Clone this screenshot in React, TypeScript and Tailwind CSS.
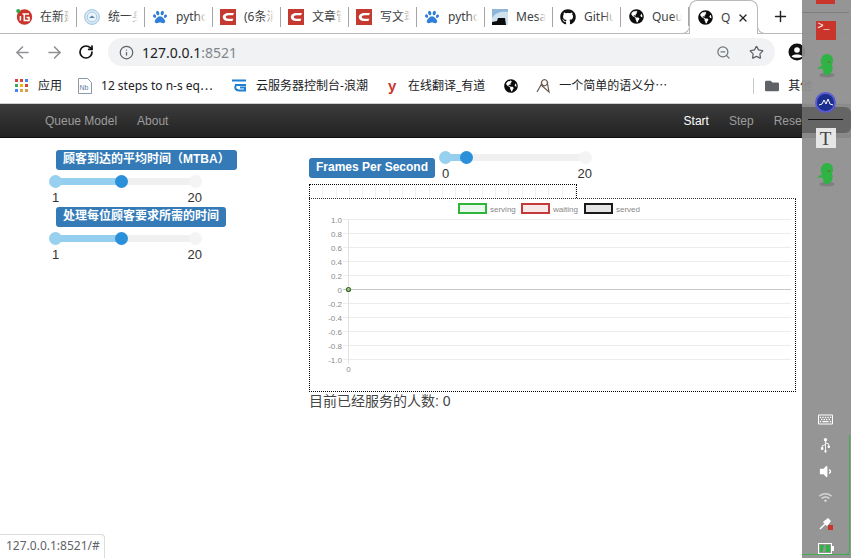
import React from "react";
import { FaGithub, FaGlobeAmericas, FaPaw, FaUsb, FaVolumeDown, FaWifi, FaRegKeyboard, FaFolder } from "react-icons/fa";
import { ArrowLeft, ArrowRight, RotateCw, Info, ZoomOut, Star, Plus, X } from "lucide-react";

const CJK = "font-['Noto_Sans','Noto_Sans_CJK_SC',sans-serif]";

function CsdnIcon() {
  return (
    <svg width="16" height="16" viewBox="0 0 16 16" className="shrink-0">
      <rect width="16" height="16" fill="#c43a31" />
      <path d="M14 4 H8.5 C5 4 2.8 5.8 2.8 8.2 C2.8 10.5 5 12 8 12 H12.4 L13.4 9.8 H8.4 C6.8 9.8 5.8 9.2 5.8 8.1 C5.8 7 6.8 6.3 8.4 6.3 H13 Z" fill="#fff" />
    </svg>
  );
}

function RedG() {
  return (
    <svg width="17" height="16" viewBox="0 0 17 16" className="shrink-0">
      <circle cx="8.5" cy="8" r="7.7" fill="#c9352b" />
      <circle cx="2.2" cy="2" r="2" fill="#2ea84a" />
      <path d="M6.5 5 H13 M8.3 5 V11.5 H13 V8.5 H10.5" stroke="#fff" strokeWidth="1.5" fill="none" />
      <path d="M4.4 7 V11.5" stroke="#fff" strokeWidth="1.5" />
    </svg>
  );
}

function Seal() {
  return (
    <svg width="16" height="16" viewBox="0 0 16 16" className="shrink-0">
      <circle cx="8" cy="8" r="7.4" fill="#d9e9f5" stroke="#9cc4e0" strokeWidth="1" />
      <circle cx="8" cy="8" r="4.8" fill="#eef5fa" stroke="#a7cbe4" strokeWidth="1" />
      <path d="M5 9 L8 6.5 L11 9 Z" fill="#4f87b5" />
    </svg>
  );
}

function MesaIcon() {
  return (
    <svg width="16" height="16" viewBox="0 0 16 16" className="shrink-0">
      <rect width="16" height="16" fill="#8db6d8" />
      <path d="M0 16 V9 C4 3 10 2 16 3 V16 Z" fill="#cfe0ee" />
      <path d="M0 16 V13 L5 12 L6 9 H13 L14 16 Z" fill="#0c0c0c" />
    </svg>
  );
}

function Tab({ icon, title }: { icon: React.ReactNode; title: string }) {
  return (
    <div className="flex h-[33px] w-[68px] shrink-0 items-center pl-[7px]">
      <div className="flex w-[16px] shrink-0 justify-center">{icon}</div>
      <div className="relative ml-[8px] w-[30px] overflow-hidden whitespace-nowrap text-[12px] leading-[18px] text-[#3c4043]">
        {title}
        <div className="absolute inset-y-0 right-0 w-[10px] bg-gradient-to-r from-transparent to-white" />
      </div>
      <div className="ml-auto h-[20px] w-px bg-[#a5a5a5]" />
    </div>
  );
}

function TabStrip() {
  const globe = <FaGlobeAmericas size={15} color="#0b0b0b" />;
  const paw = <FaPaw size={14} color="#2f7fd6" />;
  return (
    <div className="flex h-[34px] items-start border-b border-[#b8b9bb] bg-white pl-[9px]">
      <Tab icon={<RedG />} title="在新建" />
      <Tab icon={<Seal />} title="统一身" />
      <Tab icon={paw} title="python" />
      <Tab icon={<CsdnIcon />} title="(6条消" />
      <Tab icon={<CsdnIcon />} title="文章管" />
      <Tab icon={<CsdnIcon />} title="写文章" />
      <Tab icon={paw} title="python" />
      <Tab icon={<MesaIcon />} title="Mesa" />
      <Tab icon={<FaGithub size={16} color="#111" />} title="GitHub" />
      <Tab icon={globe} title="Queue" />
      <div className="relative z-10 flex h-[34px] w-[69px] shrink-0 items-center rounded-t-[8px] border-x border-t border-[#b8b9bb] bg-white pl-[8px]">
        {globe}
        <span className="ml-[8px] w-[14px] overflow-hidden text-[12px] text-[#3c4043]">Q</span>
        <X size={12} strokeWidth={2.6} className="ml-[2px] text-[#222]" />
        <div className="absolute -left-[8px] bottom-0 h-[8px] w-[8px] rounded-br-[8px] border-b border-r border-[#b8b9bb] bg-white" />
        <div className="absolute -right-[8px] bottom-0 h-[8px] w-[8px] rounded-bl-[8px] border-b border-l border-[#b8b9bb] bg-white" />
      </div>
      <Plus size={17} strokeWidth={2} className="ml-[14px] mt-[8px] text-[#222]" />
    </div>
  );
}

function AddressBar() {
  return (
    <div className="flex h-[34px] items-center bg-white pl-[13px] pt-[2px]">
      <ArrowLeft size={19} className="text-[#8f9194]" />
      <ArrowRight size={19} className="ml-[13px] text-[#8f9194]" />
      <RotateCw size={16} strokeWidth={2.6} className="ml-[14px] text-[#111]" />
      <div className="ml-[14px] flex h-[28px] w-[667px] items-center rounded-full bg-[#f0f2f4] pl-[11px]">
        <Info size={15} className="text-[#5f6368]" />
        <span className="ml-[8px] text-[14px] text-[#202124]">
          127.0.0.1<span className="text-[#80868b]">:8521</span>
        </span>
        <ZoomOut size={15} className="ml-auto text-[#70757a]" />
        <Star size={15} strokeWidth={2} className="ml-[18px] mr-[11px] text-[#5f6368]" />
      </div>
      <svg width="18" height="18" viewBox="0 0 18 18" className="ml-[13px] shrink-0">
        <circle cx="9" cy="9" r="8.5" fill="#111" />
        <circle cx="9" cy="7" r="2.8" fill="#fff" />
        <path d="M3.6 13.4 C5 11 13 11 14.4 13.4 C13 15.2 5 15.2 3.6 13.4 Z" fill="#fff" />
      </svg>
    </div>
  );
}

function Bookmarks() {
  const dots = ["#d9443a", "#d9443a", "#4285f4", "#3aa757", "#f2b50f", "#d9443a", "#4285f4", "#e0a050", "#d0a050"];
  return (
    <div className="flex h-[35px] items-center whitespace-nowrap bg-white text-[12px] text-[#202124]">
      <div className="ml-[15px] grid h-[13px] w-[13px] grid-cols-3 gap-[1.5px]">
        {dots.map((c, i) => (
          <div key={i} className="h-[3px] w-[3px]" style={{ background: c }} />
        ))}
      </div>
      <span className="ml-[10px]">应用</span>
      <svg width="14" height="16" viewBox="0 0 14 16" className="ml-[16px]">
        <path d="M.5.5 H9.5 L13.5 4.5 V15.5 H.5 Z" fill="#fff" stroke="#8a98a8" />
        <text x="1.5" y="12" fontSize="7" fill="#5d7a99" fontFamily="Liberation Sans">Nb</text>
      </svg>
      <span className="ml-[9px] w-[110px]">12 steps to n-s eq⋯</span>
      <svg width="16" height="13" viewBox="0 0 16 13" className="ml-[20px]">
        <path d="M1 1.5 H15 M4 6 H15 M5 6 C3 9 5 11.5 8 11.5 H14 V8.5 H9" stroke="#1f7fd0" strokeWidth="2" fill="none" />
      </svg>
      <span className="ml-[9px]">云服务器控制台-浪潮</span>
      <span className="ml-[20px] w-[12px] font-['Liberation_Sans'] text-[15px] font-bold leading-none text-[#c9352b]">y</span>
      <span className="ml-[8px]">在线翻译_有道</span>
      <FaGlobeAmericas size={14} color="#0b0b0b" className="ml-[19px]" />
      <svg width="16" height="16" viewBox="0 0 16 16" className="ml-[18px]">
        <path d="M1 14 L5 7 L13 14 L11 3 M6 3 a3 3 0 1 0 5 0 a3 3 0 0 0 -5 0" stroke="#6b5a50" strokeWidth="1.2" fill="none" />
      </svg>
      <span className="ml-[7px] w-[108px]">一个简单的语义分⋯</span>
      <div className="ml-[86px] h-[16px] w-px bg-[#c8c9cb]" />
      <FaFolder size={14} color="#5f6368" className="ml-[11px]" />
      <span className="ml-[9px]">其他</span>
    </div>
  );
}

function Navbar() {
  return (
    <div className="flex h-[35px] items-center border-y border-[#0e0e0e] border-t-[#cfcfcf] bg-gradient-to-b from-[#3c3c3c] to-[#222222] font-['Liberation_Sans'] text-[12px] text-[#9d9d9d]">
      <span className="ml-[45px]">Queue Model</span>
      <span className="ml-[20px]">About</span>
      <span className="ml-auto text-white">Start</span>
      <span className="ml-[20px]">Step</span>
      <span className="ml-[20px] mr-[46px]">Reset</span>
    </div>
  );
}

function Slider({ value, min, max }: { value: number; min: string; max: string }) {
  return (
    <div className="w-[153px] font-['Liberation_Sans'] text-[13px] leading-[16px] text-[#333]">
      <div className="relative h-[14px]">
        <div className="absolute inset-x-[6px] top-[3px] h-[7px] rounded-full bg-[#f0f0f0]" />
        <div className="absolute left-[6px] top-[3px] h-[7px] rounded-l-full bg-[#95cff0]" style={{ width: value }} />
        <div className="absolute left-0 top-0 h-[13px] w-[13px] rounded-full bg-[#98d0ef]" />
        <div className="absolute top-0 h-[13px] w-[13px] rounded-full bg-[#2a90da]" style={{ left: value }} />
        <div className="absolute right-0 top-0 h-[13px] w-[13px] rounded-full bg-[#f4f4f4]" />
      </div>
      <div className="flex justify-between pl-[3px] pt-[1px]">
        <span>{min}</span>
        <span>{max}</span>
      </div>
    </div>
  );
}

function Label({ text, width }: { text: string; width: number }) {
  return (
    <div
      className="h-[20px] rounded-[3px] bg-[#337ab7] pl-[7px] font-['Liberation_Sans','Noto_Sans_CJK_SC',sans-serif] text-[12px] font-bold leading-[18px] text-white"
      style={{ width }}
    >
      {text}
    </div>
  );
}

function Chart() {
  const ticks = ["1.0", "0.8", "0.6", "0.4", "0.2", "0", "-0.2", "-0.4", "-0.6", "-0.8", "-1.0"];
  const legend = [
    { x: 149, label: "serving", stroke: "#2eb53c", fill: "#eaf7ec" },
    { x: 212, label: "waiting", stroke: "#c43a3a", fill: "#f8e9e9" },
    { x: 275, label: "served", stroke: "#1a1a1a", fill: "#e4e4e4" },
  ];
  return (
    <svg width="485" height="192" viewBox="0 0 485 192" className="block font-['Liberation_Sans']">
      {legend.map((l) => (
        <g key={l.label}>
          <rect x={l.x} y={5} width={27} height={9} fill={l.fill} stroke={l.stroke} strokeWidth="2" />
          <text x={l.x + 31} y={12.5} fontSize="8" fill="#888">{l.label}</text>
        </g>
      ))}
      {ticks.map((t, i) => {
        const y = 20.5 + i * 14;
        return (
          <g key={t}>
            <line x1="33" x2="481" y1={y} y2={y} stroke={t === "0" ? "#c8c8c8" : "#ececec"} strokeWidth="1" />
            <text x="32" y={y + 3} fontSize="8" fill="#8a8a8a" textAnchor="end">{t}</text>
          </g>
        );
      })}
      <line x1="38.5" x2="38.5" y1="20" y2="165" stroke="#e2e2e2" />
      <text x="38.5" y="173" fontSize="8" fill="#8a8a8a" textAnchor="middle">0</text>
      <circle cx="38.5" cy="90.5" r="2" fill="#9fc69f" stroke="#3f6b22" strokeWidth="1.2" />
    </svg>
  );
}

function Content() {
  return (
    <div className="flex flex-1 items-start bg-white pl-[49px]">
      <div className="w-[260px] pt-[12px]">
        <div className="ml-[7px]"><Label text="顾客到达的平均时间（MTBA）" width={181} /></div>
        <div className="mt-[5px]"><Slider value={66} min="1" max="20" /></div>
        <div className="ml-[7px] mt-[1px]"><Label text="处理每位顾客要求所需的时间" width={170} /></div>
        <div className="mt-[5px]"><Slider value={66} min="1" max="20" /></div>
      </div>
      <div className="w-[487px] pt-[13px]">
        <div className="flex h-[33px] items-start">
          <div className="mt-[7px] h-[20px] w-[126px] rounded-[3px] bg-[#337ab7] text-center font-['Liberation_Sans'] text-[12px] font-bold leading-[18px] text-white">
            Frames Per Second
          </div>
          <div className="ml-[4px]"><Slider value={21} min="0" max="20" /></div>
        </div>
        <div className="flex h-[14px] w-[268px] border-x border-t border-dotted border-black">
          {Array.from({ length: 20 }).map((_, i) => (
            <div key={i} className="h-full w-[13.3px] border-r border-[#f0f0f0]" />
          ))}
        </div>
        <div className="border border-dotted border-black border-t-[#333]">
          <Chart />
        </div>
        <div className="font-['Liberation_Sans','Noto_Sans_CJK_SC',sans-serif] text-[14px] leading-[19px] text-[#444]">目前已经服务的人数: 0</div>
      </div>
    </div>
  );
}

function Snake() {
  return (
    <svg width="20" height="25" viewBox="0 0 20 26">
      <ellipse cx="11" cy="23" rx="8" ry="2.5" fill="#7f7f7f" />
      <path d="M6 13 C3 9 5 1 11 1 C17 1 19 8 16 12 C18 15 17 22 11 23 C7 23 7 19 7 17 C5 15 3 17 1 16 C3 14 5 14 6 13 Z" fill="#2fb344" />
      <rect x="12" y="9" width="2" height="1" fill="#b33" />
    </svg>
  );
}

function Dock() {
  return (
    <div className="absolute inset-y-0 right-0 flex w-[49px] flex-col items-center bg-[#8f8f8f]/95 pr-[2px] text-white">
      <div className="absolute inset-x-0 top-[107px] h-[26px] rounded-r-[6px] bg-[#2d2d2d]/40" />
      <div className="absolute left-[6px] right-[8px] top-[119px] h-px bg-[#111]" />
      <div className="absolute bottom-[3px] right-[1px] top-[435px] w-[5px] rounded-br-[6px] border-b border-r border-[#3fae4f]" />
      <div className="absolute bottom-[3px] left-0 right-[1px] h-px bg-[#3fae4f]" />
      <div className="h-[4px] w-[19px] self-center bg-[#c9352b]" />
      <div className="mt-[8px] h-px w-full bg-[#7d7d7d]" />
      <div className="mt-[8px] flex h-[19px] w-[20px] items-start bg-[#c9352b] pl-[2px] font-['Liberation_Mono'] text-[10px] leading-[12px]">&gt;_</div>
      <div className="mt-[13px]"><Snake /></div>
      <div className="relative mt-[14px] flex h-[21px] w-[21px] items-center justify-center rounded-full border-2 border-[#5a5ad0] bg-[#1c2f8f]">
        <svg width="14" height="9" viewBox="0 0 14 9"><path d="M0 7 L3 6 L5 2 L7 6 L9 1 L11 6 L14 7" stroke="#fff" strokeWidth="1" fill="none" /></svg>
      </div>
      <div className="relative mt-[15px] flex h-[20px] w-[20px] items-center justify-center bg-[#e6e6e6] font-['Liberation_Serif'] text-[19px] leading-none text-[#444]">T</div>
      <div className="mt-[14px]"><Snake /></div>
      <div className="relative mt-auto flex flex-col items-center">
        <FaRegKeyboard size={15} />
        <FaUsb size={15} className="mt-[11px] rotate-90" />
        <FaVolumeDown size={15} className="mt-[11px]" />
        <FaWifi size={13} className="mt-[12px] opacity-60" />
        <div className="relative mt-[12px] h-[14px] w-[14px]">
          <svg width="14" height="14" viewBox="0 0 14 14"><path d="M1 13 L6 8 M5 6 L9 3 L11 5 L8 9 Z" stroke="#fff" strokeWidth="1.5" fill="#fff" /></svg>
          <div className="absolute bottom-0 right-0 h-[5px] w-[5px] bg-[#c9352b]" />
        </div>
        <svg width="16" height="11" viewBox="0 0 16 11" className="mb-[4px] mt-[13px]">
          <rect x=".5" y=".5" width="13" height="10" fill="none" stroke="#fff" />
          <rect x="14" y="3" width="2" height="5" fill="#fff" />
          <path d="M2 2 H6 L4.5 9 H2 Z M8 2 H12 V9 H7 L8.5 5 H7 Z" fill="#2fb344" />
        </svg>
      </div>
    </div>
  );
}

export default function App() {
  return (
    <div className={`relative flex h-[558px] w-[851px] flex-col overflow-hidden bg-white ${CJK}`}>
      <TabStrip />
      <AddressBar />
      <Bookmarks />
      <Navbar />
      <Content />
      <Dock />
      <div className="absolute bottom-0 left-0 h-[24px] w-[105px] rounded-tr-[4px] border-r border-t border-[#dcdcdc] bg-white pl-[6px] text-[12px] leading-[22px] text-[#5f6368]">
        127.0.0.1:8521/#
      </div>
    </div>
  );
}
